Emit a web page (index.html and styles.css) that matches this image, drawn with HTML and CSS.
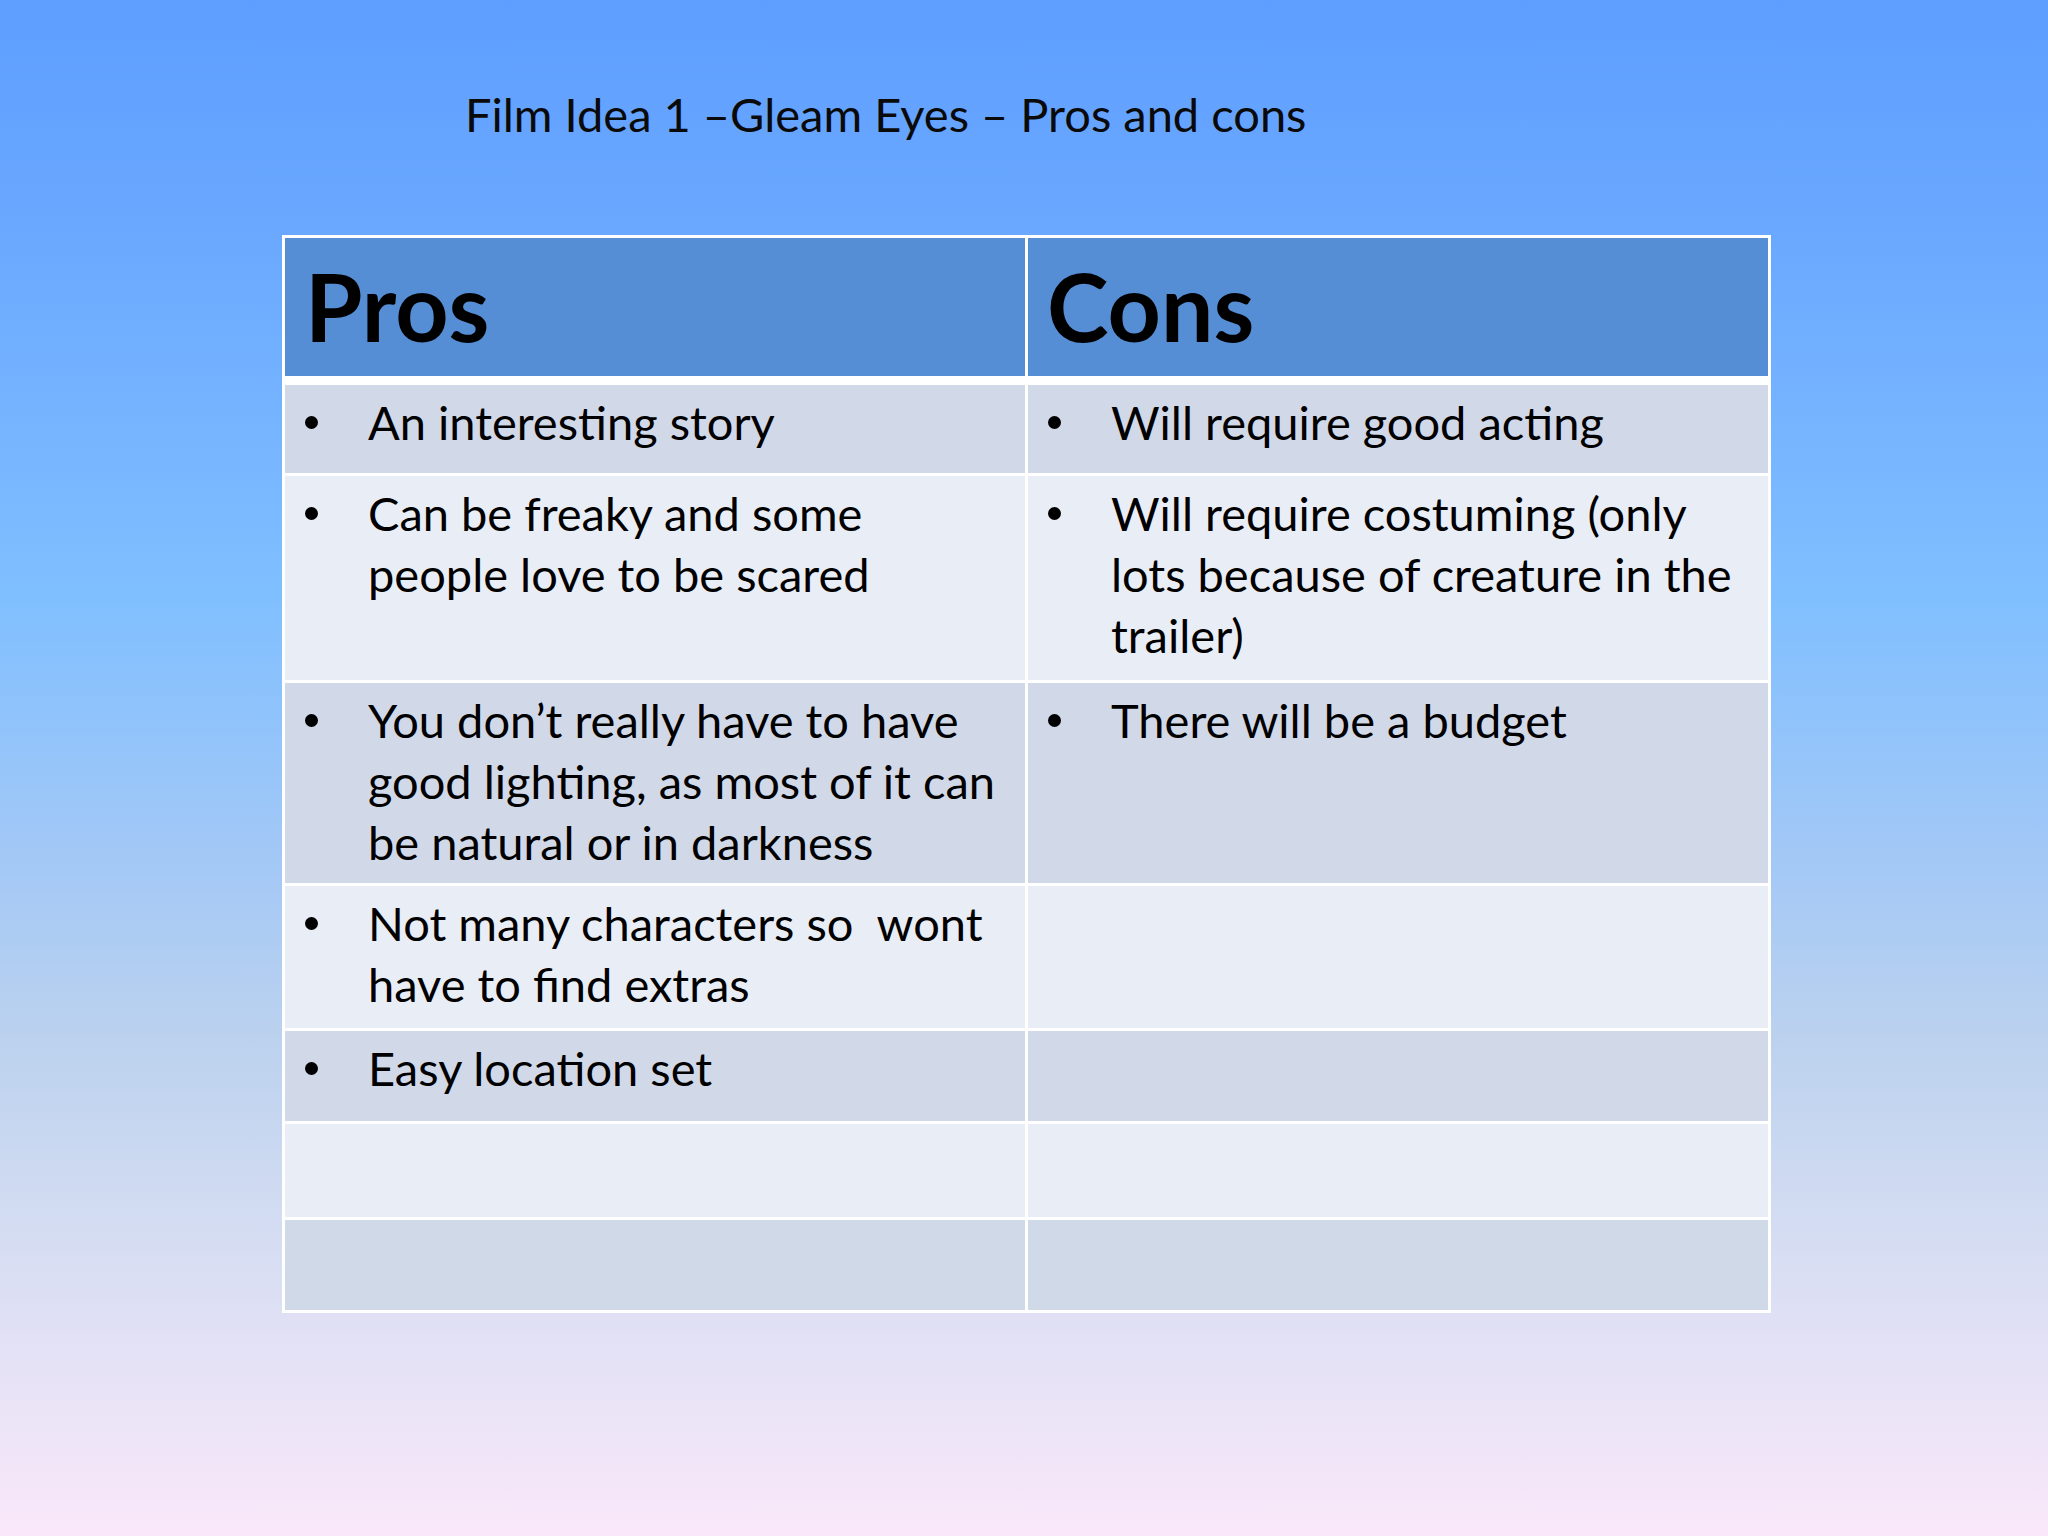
FILE: index.html
```html
<!DOCTYPE html>
<html lang="en">
<head>
<meta charset="utf-8">
<title>Film Idea 1 – Gleam Eyes – Pros and cons</title>
<link rel="stylesheet" href="styles.css">
</head>
<body>
<div class="slide">
  <h1 class="title">Film Idea 1 –Gleam Eyes – Pros and cons</h1>
  <div class="table">
    <div class="cell head">Pros</div>
    <div class="cell head">Cons</div>

    <div class="cell band"><div class="item"><span class="dot"></span><span class="txt">An interesting story</span></div></div>
    <div class="cell band"><div class="item"><span class="dot"></span><span class="txt">Will require good acting</span></div></div>

    <div class="cell light"><div class="item"><span class="dot"></span><span class="txt">Can be freaky and some people love to be scared</span></div></div>
    <div class="cell light"><div class="item"><span class="dot"></span><span class="txt">Will require costuming (only lots because of creature in the trailer)</span></div></div>

    <div class="cell band"><div class="item"><span class="dot"></span><span class="txt">You don’t really have to have good lighting, as most of it can be natural or in darkness</span></div></div>
    <div class="cell band"><div class="item"><span class="dot"></span><span class="txt">There will be a budget</span></div></div>

    <div class="cell light"><div class="item"><span class="dot"></span><span class="txt">Not many characters so&nbsp; wont have to find extras</span></div></div>
    <div class="cell light"></div>

    <div class="cell band"><div class="item"><span class="dot"></span><span class="txt">Easy location set</span></div></div>
    <div class="cell band"></div>

    <div class="cell light"></div>
    <div class="cell light"></div>

    <div class="cell band2"></div>
    <div class="cell band2"></div>
  </div>
</div>
</body>
</html>
```
FILE: styles.css
```css
html, body {
  margin: 0;
  padding: 0;
}
body {
  width: 2048px;
  height: 1536px;
  overflow: hidden;
  background: linear-gradient(to bottom,
    #5e9eff 0%,
    #6aa8ff 15%,
    #80bfff 39%,
    #a3c8f6 56%,
    #bcd2ee 68%,
    #d8def3 82%,
    #fae8fa 100%);
  font-family: Lato, "Open Sans", sans-serif;
  color: #000;
}
.slide {
  width: 2048px;
  height: 1536px;
  display: flex;
  flex-direction: column;
}
.title {
  margin: 0;
  padding: 84px 0 0 465px;
  height: 235px;
  flex: 0 0 235px;
  box-sizing: border-box;
  font-weight: 400;
  font-size: 47px;
  line-height: 61px;
  color: #0a0a0a;
}
.table {
  margin-left: 282px;
  width: 1489px;
  box-sizing: border-box;
  background: #fff;
  padding: 3px;
  display: grid;
  grid-template-columns: 740px 740px;
  grid-template-rows: 144px 88px 204px 200px 142px 90px 93px 90px;
  column-gap: 3px;
  row-gap: 3px;
}
.cell {
  box-sizing: border-box;
}
.head {
  background: #568ed6;
  font-weight: 700;
  font-size: 93px;
  line-height: 122px;
  padding: 7px 0 0 20px;
  margin-bottom: 6px;
  height: 138px;
}
.head + .head { padding-left: 19px; }
.band { background: #d1d8e8; }
.band2 { background: #cfd9e8; }
.light { background: #e9edf5; }
.item {
  display: flex;
  padding: 7px 16px 0 20px;
  font-size: 47px;
  line-height: 61px;
}
.dot {
  flex: 0 0 63px;
}
.dot::before {
  content: "";
  display: block;
  width: 13px;
  height: 13px;
  border-radius: 50%;
  background: #000;
  margin-top: 24px;
}
.txt {
  flex: 1 1 auto;
}
```
